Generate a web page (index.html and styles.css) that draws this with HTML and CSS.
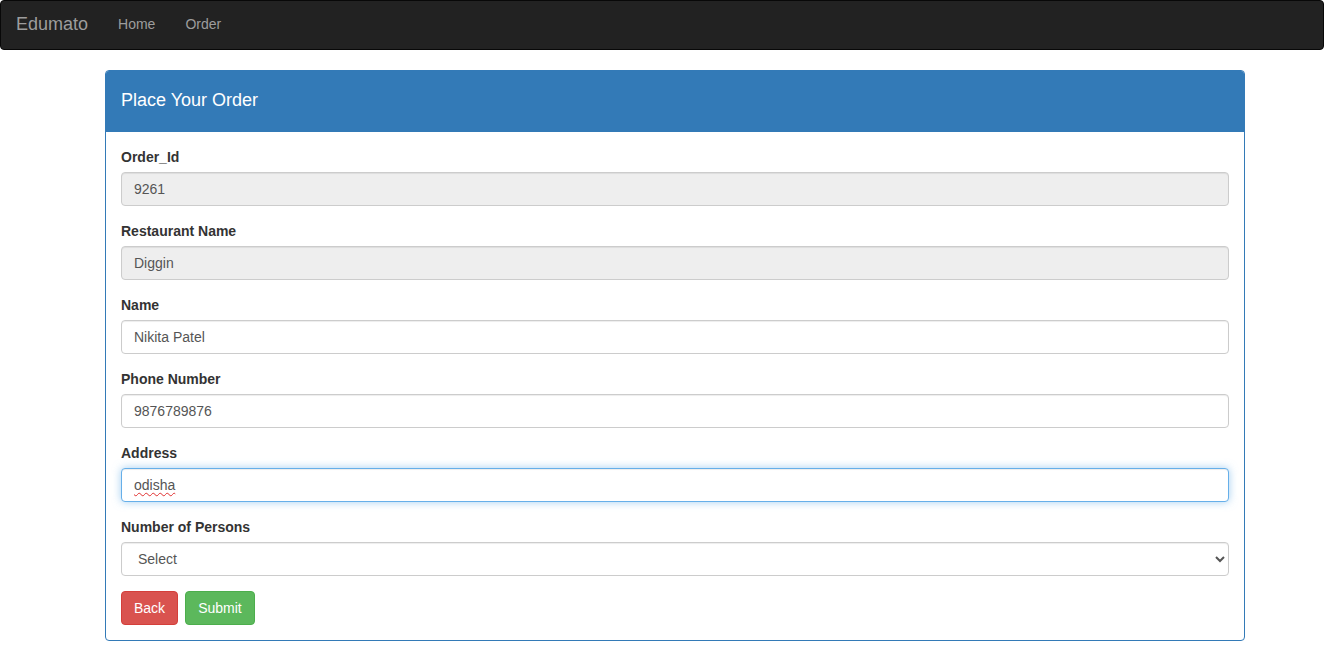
FILE: index.html
```html
<!DOCTYPE html>
<html lang="en">
<head>
<meta charset="utf-8">
<title>Edumato - Place Your Order</title>
<link rel="stylesheet" href="styles.css">
</head>
<body>
<nav class="navbar">
  <a class="brand" href="#">Edumato</a>
  <ul class="nav">
    <li><a href="#">Home</a></li>
    <li><a href="#">Order</a></li>
  </ul>
</nav>
<main class="container">
  <section class="panel">
    <div class="panel-heading"><h3 class="panel-title">Place Your Order</h3></div>
    <form class="panel-body">
      <div class="form-group">
        <label for="oid">Order_Id</label>
        <input id="oid" class="form-control" type="text" value="9261" readonly>
      </div>
      <div class="form-group">
        <label for="rname">Restaurant Name</label>
        <input id="rname" class="form-control" type="text" value="Diggin" readonly>
      </div>
      <div class="form-group">
        <label for="name">Name</label>
        <input id="name" class="form-control" type="text" value="Nikita Patel">
      </div>
      <div class="form-group">
        <label for="phone">Phone Number</label>
        <input id="phone" class="form-control" type="text" value="9876789876">
      </div>
      <div class="form-group">
        <label for="addr">Address</label>
        <div class="input-wrap">
          <input id="addr" class="form-control focused" type="text" value="odisha">
          <span class="spell-mark" aria-hidden="true">odisha</span>
        </div>
      </div>
      <div class="form-group">
        <label for="persons">Number of Persons</label>
        <select id="persons" class="form-control select">
          <option>Select</option>
          <option>1</option>
          <option>2</option>
          <option>3</option>
          <option>4</option>
        </select>
      </div>
      <div class="actions">
        <button type="button" class="btn btn-danger">Back</button>
        <button type="submit" class="btn btn-success">Submit</button>
      </div>
    </form>
  </section>
</main>
</body>
</html>
```

FILE: styles.css
```css
* { box-sizing: border-box; }
html, body { margin: 0; padding: 0; }
body {
  font-family: "Liberation Sans", Arial, Helvetica, sans-serif;
  font-size: 14px;
  line-height: 1.42857;
  color: #333;
  background: #fff;
}
.navbar {
  display: flex;
  align-items: flex-start;
  height: 50px;
  background: #222;
  border: 1px solid #080808;
  border-radius: 4px;
  margin-bottom: 20px;
}
.brand {
  padding: 0 15px;
  font-size: 18px;
  line-height: 46px;
  color: #9d9d9d;
  text-decoration: none;
}
.nav {
  display: flex;
  list-style: none;
  margin: 0;
  padding: 0;
}
.nav a {
  display: block;
  padding: 0 15px;
  line-height: 46px;
  color: #9d9d9d;
  text-decoration: none;
}
.container {
  width: 1140px;
  margin-left: 105px;
}
.panel {
  border: 1px solid #337ab7;
  border-radius: 4px;
  background: #fff;
}
.panel-heading {
  background: #337ab7;
  color: #fff;
  padding: 0 15px 3px;
  height: 61px;
  display: flex;
  align-items: center;
  border-radius: 3px 3px 0 0;
}
.panel-title {
  margin: 0;
  font-size: 18px;
  font-weight: normal;
  line-height: 20px;
}
.panel-body {
  padding: 15px;
  display: block;
}
.form-group { margin-bottom: 15px; }
label {
  display: block;
  font-weight: bold;
  margin-bottom: 5px;
  line-height: 20px;
}
.form-control {
  display: block;
  width: 100%;
  height: 34px;
  padding: 6px 12px;
  font-family: inherit;
  font-size: 14px;
  line-height: 1.42857;
  color: #555;
  background: #fff;
  border: 1px solid #ccc;
  border-radius: 4px;
  box-shadow: inset 0 1px 1px rgba(0,0,0,.075);
  outline: none;
}
.form-control[readonly] { background: #eee; }
.focused {
  border-color: #66afe9;
  box-shadow: inset 0 1px 1px rgba(0,0,0,.075), 0 0 8px rgba(102,175,233,.6);
}
.input-wrap { position: relative; }
.spell-mark {
  position: absolute;
  left: 13px;
  top: 7px;
  font-size: 14px;
  line-height: 20px;
  color: transparent;
  pointer-events: none;
  text-decoration: underline wavy #e03030;
  text-decoration-thickness: 1px;
  text-underline-offset: 2px;
}
.select { padding-left: 12px; }
.actions {
  display: flex;
  gap: 7px;
}
.btn {
  display: inline-block;
  height: 34px;
  padding: 7px 12px 5px;
  font-family: inherit;
  font-size: 14px;
  line-height: 1.42857;
  color: #fff;
  border: 1px solid transparent;
  border-radius: 4px;
  cursor: pointer;
}
.btn-danger { background: #d9534f; border-color: #d43f3a; }
.btn-success { background: #5cb85c; border-color: #4cae4c; }
```
